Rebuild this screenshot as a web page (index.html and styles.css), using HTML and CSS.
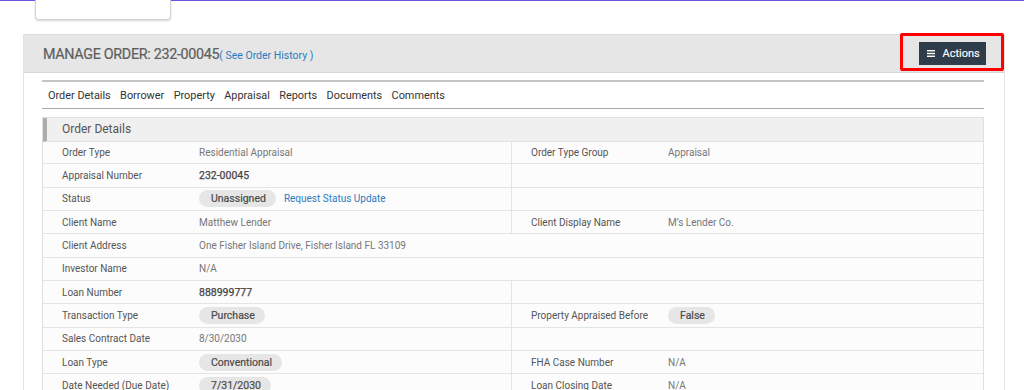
FILE: index.html
```html
<!DOCTYPE html>
<html lang="en">
<head>
  <meta charset="UTF-8">
  <meta name="viewport" content="width=device-width, initial-scale=1.0">
  <title>Manage Order</title>
  <link rel="stylesheet" href="styles.css">
</head>
<body>
  <div class="topbar">
    <div class="topbar-tab"></div>
  </div>

  <div class="panel">
    <div class="panel-header">
      <h1>MANAGE ORDER: 232-00045<a href="#" class="history">( See Order History )</a></h1>
      <div class="actions-wrap">
        <button class="actions-btn">
          <svg width="8" height="7" viewBox="0 0 8 7"><rect x="0" y="0" width="8" height="1.4" fill="#fff"/><rect x="0" y="2.8" width="8" height="1.4" fill="#fff"/><rect x="0" y="5.6" width="8" height="1.4" fill="#fff"/></svg>
          Actions
        </button>
      </div>
    </div>

    <div class="panel-body">
      <ul class="tabs">
        <li>Order Details</li>
        <li>Borrower</li>
        <li>Property</li>
        <li>Appraisal</li>
        <li>Reports</li>
        <li>Documents</li>
        <li>Comments</li>
      </ul>

      <div class="section">
        <div class="section-title">Order Details</div>

        <div class="row">
          <div class="half"><span class="label">Order Type</span><span class="value">Residential Appraisal</span></div>
          <div class="half"><span class="label">Order Type Group</span><span class="value">Appraisal</span></div>
        </div>
        <div class="row">
          <div class="half"><span class="label">Appraisal Number</span><span class="value strong">232-00045</span></div>
          <div class="half"></div>
        </div>
        <div class="row">
          <div class="half"><span class="label">Status</span><span class="value"><span class="pill">Unassigned</span><a href="#" class="link">Request Status Update</a></span></div>
          <div class="half"></div>
        </div>
        <div class="row">
          <div class="half"><span class="label">Client Name</span><span class="value">Matthew Lender</span></div>
          <div class="half"><span class="label">Client Display Name</span><span class="value">M’s Lender Co.</span></div>
        </div>
        <div class="row full">
          <div class="half"><span class="label">Client Address</span><span class="value">One Fisher Island Drive, Fisher Island FL 33109</span></div>
        </div>
        <div class="row full">
          <div class="half"><span class="label">Investor Name</span><span class="value">N/A</span></div>
        </div>
        <div class="row">
          <div class="half"><span class="label">Loan Number</span><span class="value strong">888999777</span></div>
          <div class="half"></div>
        </div>
        <div class="row">
          <div class="half"><span class="label">Transaction Type</span><span class="value"><span class="pill">Purchase</span></span></div>
          <div class="half"><span class="label">Property Appraised Before</span><span class="value"><span class="pill">False</span></span></div>
        </div>
        <div class="row">
          <div class="half"><span class="label">Sales Contract Date</span><span class="value">8/30/2030</span></div>
          <div class="half"></div>
        </div>
        <div class="row">
          <div class="half"><span class="label">Loan Type</span><span class="value"><span class="pill">Conventional</span></span></div>
          <div class="half"><span class="label">FHA Case Number</span><span class="value">N/A</span></div>
        </div>
        <div class="row">
          <div class="half"><span class="label">Date Needed (Due Date)</span><span class="value"><span class="pill">7/31/2030</span></span></div>
          <div class="half"><span class="label">Loan Closing Date</span><span class="value">N/A</span></div>
        </div>
      </div>
    </div>
  </div>
</body>
</html>
```

FILE: styles.css
```css
body {
  margin: 0;
  font-family: Roboto, "Liberation Sans", sans-serif;
  background: #fff;
  color: #555;
}
a {
  text-decoration: none;
}
.topbar {
  border-top: 1px solid #6b52e6;
  height: 33px;
  padding-left: 35px;
}
.topbar-tab {
  width: 134px;
  height: 19px;
  margin-top: -1px;
  background: #fff;
  border: 1px solid #d4d4d4;
  border-top: none;
  border-radius: 0 0 4px 4px;
  box-shadow: 0 1px 2px rgba(0, 0, 0, 0.18);
}
.panel {
  margin-left: 23px;
  width: 980px;
  border-left: 1px solid #e2e2e2;
  border-right: 1px solid #e2e2e2;
  height: 400px;
}
.panel-header {
  height: 37px;
  background: #e6e6e6;
  border-top: 1px solid #dcdcdc;
  border-bottom: 1px solid #d6d6d6;
  display: flex;
  align-items: center;
  justify-content: space-between;
}
.panel-header h1 {
  margin: 0 0 0 19px;
  font-size: 14.3px;
  font-weight: 400;
  color: #5e5e5e;
  letter-spacing: -0.3px;
  -webkit-text-stroke: 0.2px #5e5e5e;
}
.history {
  font-size: 10.5px;
  color: #2d7bc0;
  letter-spacing: 0;
  -webkit-text-stroke: 0;
}
.actions-wrap {
  border: 3px solid #ff0000;
  border-radius: 2px;
  height: 32px;
  width: 98px;
  margin-right: 0;
  margin-top: -3px;
  display: flex;
  align-items: center;
  justify-content: center;
}
.actions-btn {
  background: #2f3d4a;
  color: #fff;
  border: none;
  height: 23px;
  width: 67px;
  padding: 0 0 0 8px;
  margin-top: 2px;
  font-family: inherit;
  font-size: 11px;
  -webkit-text-stroke: 0.15px #fff;
  display: flex;
  align-items: center;
  gap: 8px;
}
.panel-body {
  padding: 7px 20px 0 18px;
}
.tabs {
  list-style: none;
  margin: 0;
  padding: 0 0 0 6px;
  border-top: 2px solid #c3c6c9;
  border-bottom: 1.5px solid #a9a9a9;
  height: 26px;
  display: flex;
  align-items: center;
  gap: 9.4px;
}
.tabs li {
  font-size: 10.9px;
  color: #333;
}
.section {
  margin-top: 8px;
  border: 1px solid #e0e0e0;
  border-bottom: none;
  background: #fcfcfc;
}
.section-title {
  height: 23px;
  line-height: 23px;
  background: #f0f0f0;
  border-left: 4px solid #acacac;
  padding-left: 15px;
  font-size: 12px;
  color: #555;
  border-bottom: 1px solid #e2e2e2;
}
.row {
  display: grid;
  grid-template-columns: 469px 1fr;
  height: 22.35px;
  border-bottom: 1px solid #e4e4e4;
}
.row:nth-of-type(2) {
  margin-top: -1px;
}
.row.full {
  grid-template-columns: 1fr;
}
.half {
  display: flex;
  align-items: center;
  padding-left: 19px;
}
.row .half:first-child {
  border-right: 1px solid #e4e4e4;
}
.row.full .half:first-child {
  border-right: none;
}
.label {
  width: 137px;
  flex-shrink: 0;
  font-size: 10px;
  color: #555;
}
.value {
  font-size: 10px;
  color: #777;
  display: flex;
  align-items: center;
}
.value.strong {
  color: #444;
  font-size: 10.5px;
  font-weight: 400;
  -webkit-text-stroke: 0.25px #444;
}
.pill {
  background: #e6e6e6;
  color: #4a4a4a;
  font-size: 10.5px;
  font-weight: 400;
  -webkit-text-stroke: 0.2px #4a4a4a;
  border-radius: 9px;
  padding: 0 10px 0 12px;
  height: 17px;
  line-height: 17px;
}
.link {
  color: #2d7bc0;
  margin-left: 8px;
}
```
